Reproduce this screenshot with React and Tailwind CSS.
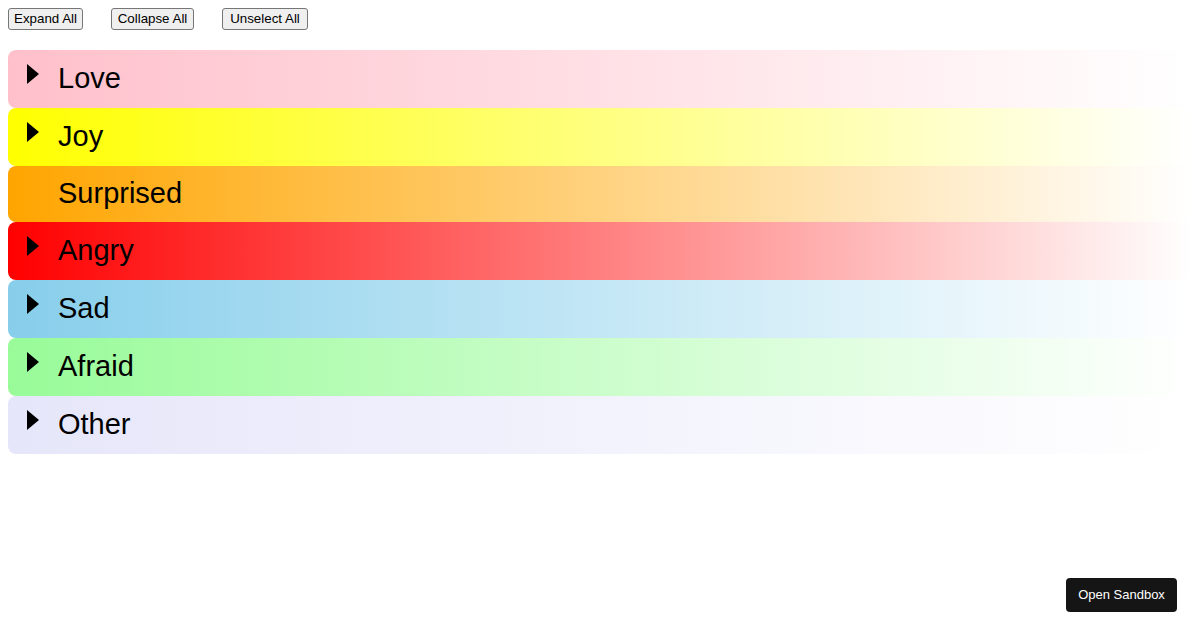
import React, { useState } from "react";

const rows = [
  { name: "Love", bg: "bg-[linear-gradient(to_right,#ffc0cb,#ffffff)]", arrow: true },
  { name: "Joy", bg: "bg-[linear-gradient(to_right,#ffff00,#ffffff)]", arrow: true },
  { name: "Surprised", bg: "bg-[linear-gradient(to_right,#ffa500,#ffffff)]", arrow: false },
  { name: "Angry", bg: "bg-[linear-gradient(to_right,#ff0000,#ffffff)]", arrow: true },
  { name: "Sad", bg: "bg-[linear-gradient(to_right,#87ceeb,#ffffff)]", arrow: true },
  { name: "Afraid", bg: "bg-[linear-gradient(to_right,#98fb98,#ffffff)]", arrow: true },
  { name: "Other", bg: "bg-[linear-gradient(to_right,#e6e6fa,#ffffff)]", arrow: true },
];

function Arrow() {
  return (
    <svg width="12" height="20" viewBox="0 0 12 20" className="block">
      <polygon points="0,0 12,10 0,20" fill="#000" />
    </svg>
  );
}

function Row({ name, bg, arrow }) {
  return (
    <div
      className={`${bg} rounded-lg flex items-center pl-[19px] ${arrow ? "h-[58px]" : "h-[56px]"}`}
    >
      <div className="w-[12px] mb-[10px]">{arrow && <Arrow />}</div>
      <span className="ml-[19px] text-[29px] leading-none text-black mb-[2px]">{name}</span>
    </div>
  );
}

export default function App() {
  const [open, setOpen] = useState(false);
  const btn =
    "h-[22px] text-[13.33px] leading-none text-black bg-[#efefef] border border-[#767676] rounded-[3px]";

  return (
    <div className="relative w-[1200px] h-[630px] bg-white font-['Liberation_Sans',Arial,sans-serif]">
      <div className="pt-[8px] px-[8px] flex gap-[28px]">
        <button className={`${btn} w-[75px]`} onClick={() => setOpen(true)}>Expand All</button>
        <button className={`${btn} w-[83px]`} onClick={() => setOpen(false)}>Collapse All</button>
        <button className={`${btn} w-[86px]`}>Unselect All</button>
      </div>

      <div className="mt-[20px] mx-[8px] flex flex-col">
        {rows.map((r) => (
          <Row key={r.name} {...r} />
        ))}
      </div>

      <button className="absolute right-[23px] bottom-[18px] h-[34px] w-[111px] rounded-[4px] bg-[#151515] text-white text-[13px]">
        Open Sandbox
      </button>
    </div>
  );
}
